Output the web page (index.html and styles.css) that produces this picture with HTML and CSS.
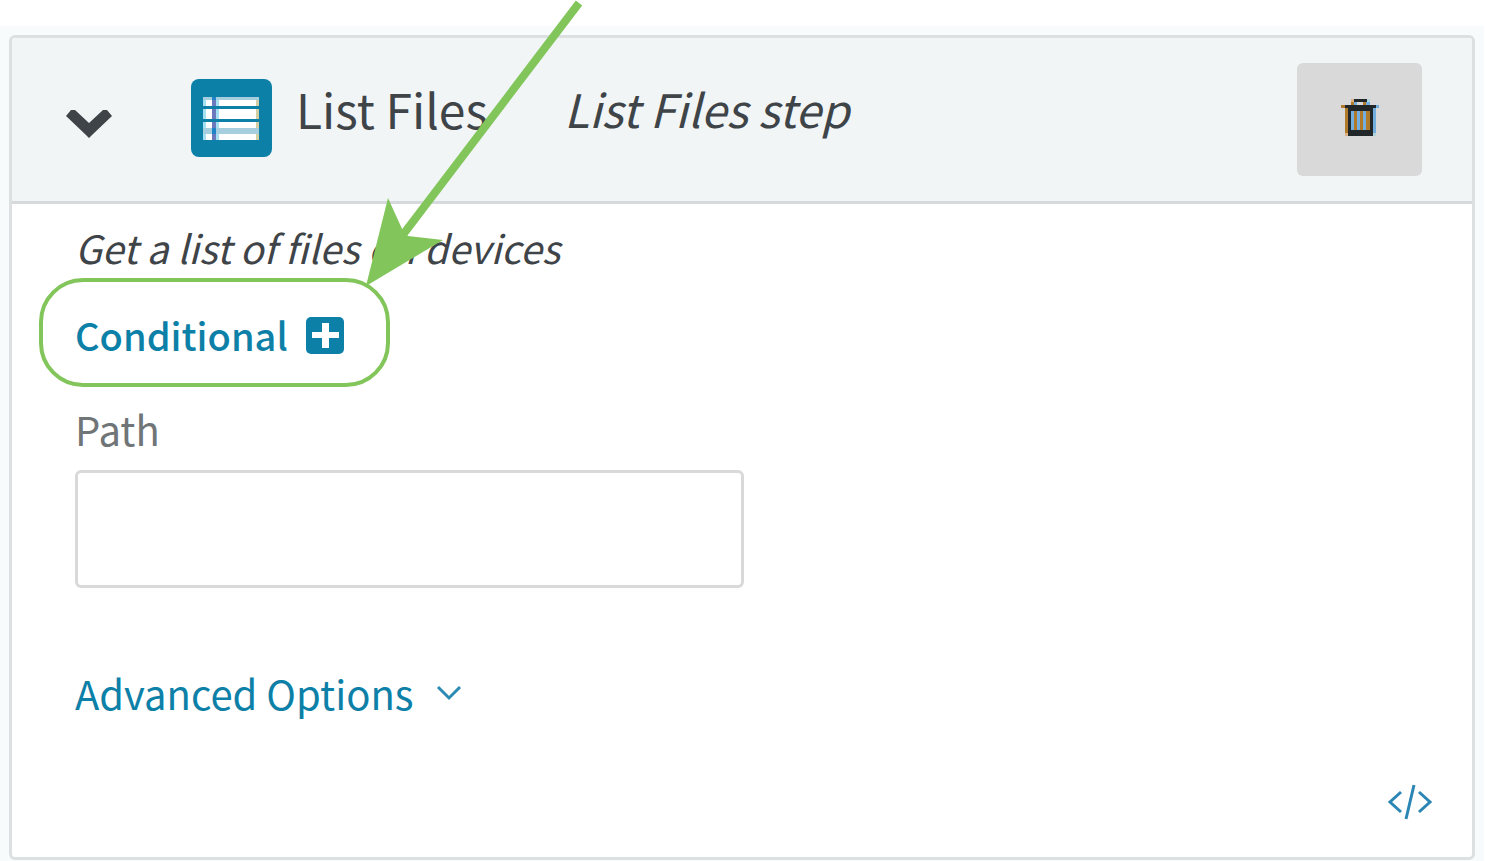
FILE: index.html
```
<!DOCTYPE html>
<html lang="en">
<head>
  <meta charset="UTF-8">
  <title>List Files step</title>
  <link rel="stylesheet" href="styles.css">
</head>
<body>
  <main class="page">
    <section class="step">
      <header class="step-header">
        <button class="icon-button toggle" type="button" aria-label="Collapse step">
          <svg width="48" height="32" viewBox="0 0 48 32"><path fill="#3f4448" d="M1 8 6 2h4l14 13L38 2h4l5 6-20 19-3 3-3-3z"/></svg>
        </button>
        <span class="step-icon">
          <svg width="57" height="44" viewBox="0 0 57 44" shape-rendering="crispEdges">
            <path fill="#fff" d="M0 1h56v9H0zM0 13h56v10H0zM0 26h56v18H0z"/>
            <path fill="#a5cfdf" d="M0 1h56v3H0zM0 32h56v6H0z"/>
            <path fill="#a5e0f2" d="M0 4h3v6H0zM0 13h3v10H0zM0 26h3v6H0zM0 38h3v6H0zM13 4h3v6h-3zM13 13h3v10h-3zM13 26h3v6h-3zM13 38h3v6h-3z"/>
            <path fill="#6b79bd" d="M9 4h4v6H9zM9 13h4v10H9zM9 26h4v6H9zM9 38h4v6H9z"/>
            <path fill="#1d84c8" d="M9 1h4v3H9zM9 32h4v6H9z"/>
            <path fill="#d3cfa5" d="M53 4h3v6h-3zM53 13h3v10h-3zM53 26h3v6h-3zM53 38h3v6h-3z"/>
          </svg>
        </span>
        <h2 class="step-type">List Files</h2>
        <span class="step-name">List Files step</span>
        <button class="delete" type="button" aria-label="Delete step">
          <svg width="38" height="37" viewBox="0 0 38 37" shape-rendering="crispEdges">
            <path fill="#212629" d="M10 0h19v6H10zM4 6h31v3H4zM6 9h26v28H6z"/>
            <path fill="#d9d9d9" d="M16 3h6v3h-6z"/>
            <path fill="#b17a2a" d="M0 6h4v3H0zM4 9h3v25H4zM10 3h3v3h-3zM22 3h3v3h-3z"/>
            <path fill="#72afdf" d="M35 6h3v3h-3zM32 9h3v25h-3zM13 3h3v3h-3zM25 3h4v3h-4zM10 12h19v19H10z"/>
            <path fill="#b17a2a" d="M13 12h3v19h-3zM19 12h3v19h-3zM25 12h4v19h-4z"/>
            <path fill="#dbb186" d="M10 0h3v3h-3zM4 34h3v3H4z"/>
            <path fill="#b0d5db" d="M26 0h3v3h-3zM32 34h3v3h-3z"/>
          </svg>
        </button>
      </header>

      <div class="step-body">
        <p class="description">Get a list of files on devices</p>

        <button class="link-button conditional" type="button">
          Conditional
          <svg width="38" height="37" viewBox="0 0 38 37"><rect width="38" height="37" rx="5" fill="#0d80a8"/><path fill="#fff" d="M16 6h7v9h10v6H23v10h-7V21H6v-6h10z"/></svg>
        </button>

        <label class="field-label" for="path">Path</label>
        <input class="field" id="path" type="text">

        <button class="link-button advanced" type="button">
          Advanced Options
          <svg width="26" height="16" viewBox="0 0 26 16"><path fill="none" stroke="#2c8bb2" stroke-width="3" d="m2 2 11 11L24 2"/></svg>
        </button>

        <button class="icon-button code" type="button" aria-label="View code">
          <svg width="48" height="36" viewBox="0 0 48 36"><path fill="none" stroke="#2b86b4" stroke-width="3" d="M15 8 4 18l11 10M33 8l11 10-11 10M28 1l-8 34"/></svg>
        </button>
      </div>
    </section>

    <!-- pointer to the Conditional control -->
    <svg class="pointer" width="240" height="300" viewBox="360 0 240 300" aria-hidden="true">
      <path fill="none" stroke="#82c55b" stroke-width="8" d="M579 3 402 236"/>
      <path fill="#82c55b" d="m366 286 22-88 15 33 5 5 35 4z"/>
    </svg>
  </main>
</body>
</html>
```

FILE: styles.css
```
body {
  margin: 0;
  background-color: #fff;
  color: #3f4448;
  font-family: "Noto Sans CJK SC", "Noto Sans", sans-serif;
  font-size: 40px;
  line-height: 48px;
}

.page {
  position: relative;
  padding: 26px 0 1px;
}
.page::before {
  content: "";
  position: absolute;
  z-index: -1;
  inset: 26px 1px 0 0;
  background-color: #f7fbfc;
}

button {
  margin: 0;
  padding: 0;
  border: 0;
  background: none;
  color: inherit;
  font: inherit;
  cursor: pointer;
}
svg {
  display: block;
}

/* Step card */
.step {
  margin: 9px 10px 0 9px;
  border: 3px solid #dce0e1;
  border-radius: 6px;
  background-color: #fff;
}

/* Header */
.step-header {
  display: flex;
  align-items: center;
  padding: 25px 50px 25px 53px;
  border-bottom: 3px solid #d7dadc;
  border-radius: 4px 4px 0 0;
  background-color: #f1f5f6;
}
.toggle {
  padding-top: 8px;
}
.step-icon {
  display: flex;
  align-items: center;
  box-sizing: border-box;
  width: 81px;
  height: 78px;
  margin: 0 24px 4px 78px;
  padding-left: 12px;
  border-radius: 8px;
  background-color: #0d80a8;
}
.step-type,
.step-name {
  margin: 0 0 24px;
  font-size: 48px;
  font-weight: 400;
  line-height: 48px;
  white-space: nowrap;
}
.step-name {
  margin-left: 76px;
  font-size: 46px;
  font-style: italic;
}
.delete {
  display: flex;
  align-items: center;
  justify-content: center;
  width: 125px;
  height: 113px;
  margin-left: auto;
  padding-bottom: 4px;
  border-radius: 6px;
  background-color: #d9d9d9;
}

/* Body */
.step-body {
  display: flex;
  flex-direction: column;
  align-items: flex-start;
  padding: 19px 38px 37px 63px;
}
.description {
  margin: 0 0 40px;
  font-size: 39px;
  font-style: italic;
}
.link-button {
  display: flex;
  align-items: center;
  gap: 18px;
  color: #0d80a8;
}
.conditional {
  position: relative;
  margin-bottom: 46px;
  font-size: 38px;
  font-weight: 500;
}
.conditional::after {
  content: "";
  position: absolute;
  inset: -33px -46px -28px -36px;
  border: 4px solid #82c55b;
  border-radius: 44px;
}
.field-label {
  margin-bottom: 17px;
  color: #707578;
}
.field {
  box-sizing: border-box;
  width: 669px;
  max-width: 100%;
  height: 118px;
  padding: 0 24px;
  border: 3px solid #d9d9d9;
  border-radius: 6px;
  background-color: #fff;
  color: inherit;
  font: inherit;
}
.advanced {
  gap: 22px;
  margin: 81px 0 67px;
}
.code {
  align-self: flex-end;
}

.pointer {
  position: absolute;
  top: 0;
  left: 360px;
  pointer-events: none;
}
```
